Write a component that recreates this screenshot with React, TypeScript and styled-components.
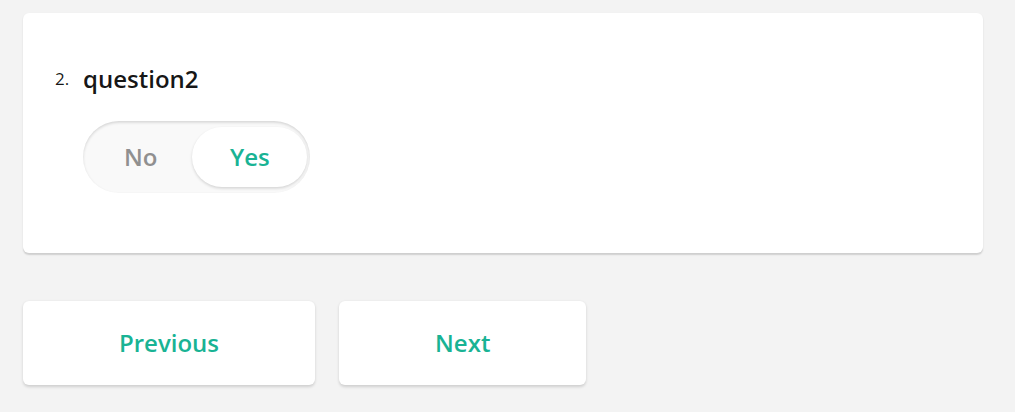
import React, {useState} from 'react';
import styled, {createGlobalStyle} from 'styled-components';

const primary = '#19b394';

const GlobalStyle = createGlobalStyle`
  html, body {
    margin: 0;
    padding: 0;
    background: #f3f3f3;
    font-family: "Open Sans", "Liberation Sans", sans-serif;
  }
`;

const Page = styled.div`
  padding: 13px 32px 24px 23px;
  display: flex;
  flex-direction: column;
  gap: 48px;
`;

const QuestionCard = styled.div`
  background: #fff;
  border-radius: 6px;
  box-shadow: 0 1.5px 1.5px rgba(0, 0, 0, 0.15);
  padding: 48px 60px 60px;
  display: flex;
  flex-direction: column;
  gap: 24px;
`;

const Title = styled.h5`
  margin: 0;
  position: relative;
  font-size: 24px;
  line-height: 36px;
  font-weight: 600;
  color: rgba(0, 0, 0, 0.91);
`;

// number hangs to the left of the title text
const Num = styled.span`
  position: absolute;
  left: -28px;
  top: 0;
  font-size: 17px;
  line-height: 36px;
  font-weight: 400;
  color: rgba(0, 0, 0, 0.91);
`;

const Toggle = styled.div`
  display: inline-flex;
  align-self: flex-start;
  box-sizing: border-box;
  height: 72px;
  padding: 6px 3px 6px 6px;
  border-radius: 150px;
  background: #f9f9f9;
  box-shadow: inset 0 1.5px 3px rgba(0, 0, 0, 0.15);
`;

const ToggleOption = styled.button<{selected: boolean}>`
  border: none;
  cursor: pointer;
  font-family: inherit;
  font-size: 24px;
  line-height: 36px;
  font-weight: 600;
  height: 60px;
  padding: 0 ${props => props.selected ? 37.5 : 35}px;
  border-radius: 150px;
  background: ${props => props.selected ? '#fff' : 'transparent'};
  color: ${props => props.selected ? primary : '#909090'};
  box-shadow: ${props => props.selected ? '0 1.5px 3px rgba(0, 0, 0, 0.15)' : 'none'};
`;

const Nav = styled.div`
  display: flex;
  gap: 24px;
`;

const NavButton = styled.button`
  border: none;
  cursor: pointer;
  background: #fff;
  border-radius: 6px;
  box-shadow: 0 1.5px 3px rgba(0, 0, 0, 0.15);
  padding: 24px 96px;
  font-family: inherit;
  font-size: 24px;
  line-height: 36px;
  font-weight: 600;
  color: ${primary};
`;

const App: React.FC = () => {
  const [answer, setAnswer] = useState(true);

  return (
    <>
      <GlobalStyle />
      <Page>
        <QuestionCard>
          <Title>
            <Num>2.</Num>
            question2
          </Title>
          <Toggle>
            <ToggleOption selected={!answer} onClick={() => setAnswer(false)}>No</ToggleOption>
            <ToggleOption selected={answer} onClick={() => setAnswer(true)}>Yes</ToggleOption>
          </Toggle>
        </QuestionCard>
        <Nav>
          <NavButton>Previous</NavButton>
          <NavButton>Next</NavButton>
        </Nav>
      </Page>
    </>
  );
};

export default App;
